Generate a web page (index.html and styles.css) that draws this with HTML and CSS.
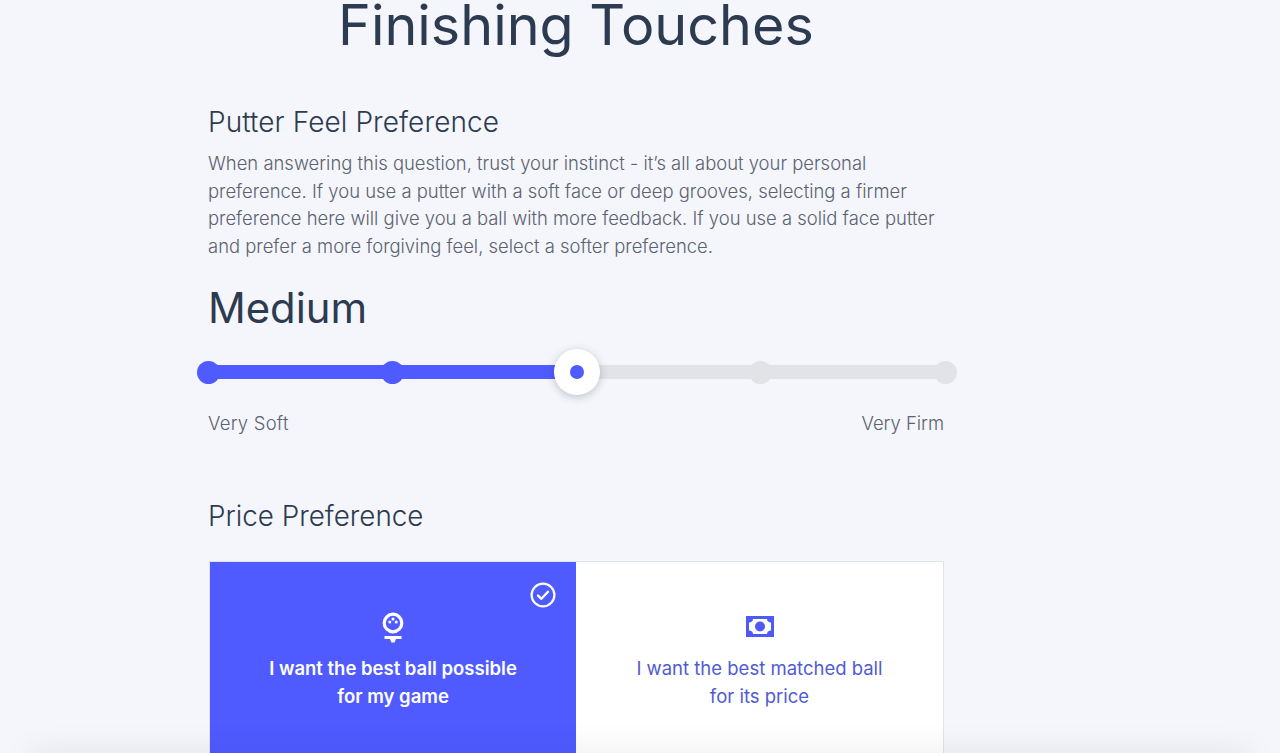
FILE: index.html
```html
<!DOCTYPE html>
<html lang="en">
<head>
<meta charset="utf-8">
<title>Finishing Touches</title>
<link rel="stylesheet" href="styles.css">
</head>
<body>
<main class="page">
  <h1 class="title">Finishing Touches</h1>
  <section class="feel">
    <h2 class="heading">Putter Feel Preference</h2>
    <p class="copy">When answering this question, trust your instinct - it’s all about your personal preference. If you use a putter with a soft face or deep grooves, selecting a firmer preference here will give you a ball with more feedback. If you use a solid face putter and prefer a more forgiving feel, select a softer preference.</p>
    <div class="value">Medium</div>
    <div class="slider">
      <div class="track"><div class="track-fill"></div></div>
      <span class="stop stop-on"></span>
      <span class="stop stop-on"></span>
      <span class="thumb"><span class="thumb-dot"></span></span>
      <span class="stop"></span>
      <span class="stop"></span>
    </div>
    <div class="scale"><span class="scale-low">Very Soft</span><span>Very Firm</span></div>
  </section>
  <section class="price">
    <h2 class="heading heading-price">Price Preference</h2>
    <div class="options">
      <div class="option option-on">
        <svg class="check" viewBox="0 0 26 26" width="26" height="26" aria-hidden="true"><circle cx="13" cy="13" r="11.400" fill="none" stroke="#fff" stroke-width="2.200"/><path d="M8 13.600l3.400 3.200 6.600-7" fill="none" stroke="#fff" stroke-width="2.400" stroke-linecap="round" stroke-linejoin="round"/></svg>
        <svg class="icon" viewBox="0 0 22 32" width="22" height="32" aria-hidden="true"><circle cx="11" cy="12" r="8.800" fill="none" stroke="#fff" stroke-width="3.200"/><circle cx="11" cy="8" r="1.500" fill="#fff"/><circle cx="7.800" cy="11" r="1.500" fill="#fff"/><circle cx="14.200" cy="11" r="1.500" fill="#fff"/><path d="M2.500 25h17v3h-5.500L12.500 31.500h-3L8 28H2.500z" fill="#fff"/></svg>
        <div class="label"><strong>I want the best ball possible<br>for my game</strong></div>
      </div>
      <div class="option">
        <svg class="icon" viewBox="0 0 28 32" width="28" height="32" aria-hidden="true"><path fill-rule="evenodd" d="M0 5h28v21H0zM7 8c0 2-1.700 3.500-4 3.500v8c2.300 0 4 1.500 4 3.500h14c0-2 1.700-3.500 4-3.500v-8c-2.300 0-4-1.500-4-3.500z" fill="#4f5bf0"/><circle cx="14" cy="15.500" r="5" fill="#4f5bf0"/></svg>
        <div class="label">I want the best matched ball<br>for its price</div>
      </div>
    </div>
  </section>
  <div class="fade"></div>
</main>
</body>
</html>
```
FILE: styles.css
```css
* { box-sizing: border-box; }
html, body { margin: 0; height: 100%; }
body {
  background: #f4f6fb;
  color: #2c3b50;
  font-family: Inter, "Liberation Sans", sans-serif;
  overflow: hidden;
}
.page {
  position: relative;
  height: 753px;
  overflow: hidden;
  display: flex;
  flex-direction: column;
  padding-left: 208px;
}
.title {
  width: 736px;
  margin: -11px 0 0;
  font-size: 55.700px;
  line-height: 72px;
  font-weight: 400;
  text-align: center;
}
.feel { width: 736px; margin-top: 41px; }
.heading {
  margin: 0;
  font-size: 28px;
  line-height: 40px;
  font-weight: 350;
  letter-spacing: .09px;
}
.heading-price { font-size: 27.800px; letter-spacing: 0; }
.copy {
  margin: 8px 0 0;
  font-size: 18.450px;
  line-height: 27.600px;
  font-weight: 300;
  color: #5b6270;
}
.value {
  margin-top: 18px;
  font-size: 41.800px;
  line-height: 60px;
  font-weight: 400;
}
.slider {
  position: relative;
  width: 737px;
  height: 46px;
  margin-top: 11px;
  display: flex;
  justify-content: space-between;
  align-items: center;
}
.track {
  position: absolute;
  left: 0;
  right: 0;
  top: 16px;
  height: 14px;
  background: #e2e3e7;
}
.track-fill { width: 50%; height: 100%; background: #4f5bff; }
.stop {
  position: relative;
  width: 23px;
  height: 23px;
  margin: 0 -11.500px;
  border-radius: 50%;
  background: #e2e3e7;
}
.stop-on { background: #4f5bff; }
.thumb {
  position: relative;
  width: 46px;
  height: 46px;
  margin: 0 -23px;
  border-radius: 50%;
  background: #fff;
  box-shadow: 0 2px 8px rgba(30, 35, 60, .25);
  display: flex;
  align-items: center;
  justify-content: center;
}
.thumb-dot { width: 14px; height: 14px; border-radius: 50%; background: #4f5bff; }
.scale {
  display: flex;
  justify-content: space-between;
  margin-top: 14px;
  font-size: 18.450px;
  line-height: 28px;
  font-weight: 300;
  color: #5b6270;
}
.scale-low { letter-spacing: .25px; }
.price { width: 736px; margin-top: 59px; }
.options {
  display: grid;
  grid-template-columns: 366px 1fr;
  height: 240px;
  margin: 25px 0 0 1px;
  background: #fff;
  border: 1px solid #dfe3ea;
}
.option {
  position: relative;
  display: flex;
  flex-direction: column;
  align-items: center;
  padding-top: 49px;
  text-align: center;
  color: #4f5bd5;
}
.option-on { background: #4f5bff; color: #fff; }
.check { position: absolute; top: 20px; right: 20px; }
.icon { display: block; }
.label {
  margin-top: 12px;
  font-size: 18.500px;
  line-height: 27.600px;
  font-weight: 400;
}
.label strong { font-weight: 600; }
.fade {
  position: absolute;
  left: 30px;
  right: 30px;
  bottom: -10px;
  height: 10px;
  box-shadow: 0 0 30px rgba(0, 0, 0, .14);
}
```
